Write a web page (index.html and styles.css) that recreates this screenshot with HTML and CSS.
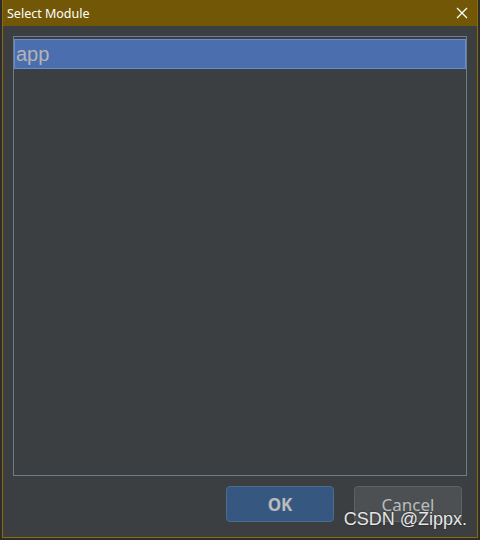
FILE: index.html
```html
<!DOCTYPE html>
<html>
  <head>
    <meta charset="utf-8" />
    <link rel="stylesheet" href="styles.css">
  </head>
  <body>
    <div class="screen">
      <div class="dialog">
        <div class="titlebar">
          <span class="title">Select Module</span>
          <svg class="close" width="12" height="12" viewBox="0 0 12 12">
            <path d="M1 1 L11 11 M11 1 L1 11" stroke="#ffffff" stroke-width="1.3" fill="none" />
          </svg>
        </div>

        <div class="content">
          <div class="module-list">
            <div class="module-item selected">app</div>
          </div>

          <div class="buttons">
            <button class="btn btn-ok">OK</button>
            <button class="btn btn-cancel">Cancel</button>
          </div>
        </div>
      </div>

      <div class="watermark">CSDN @Zippx.</div>
    </div>
  </body>
</html>
```

FILE: styles.css
```css
* {
  margin: 0;
  padding: 0;
  box-sizing: border-box;
}

body {
  background: #2b2b2b;
  font-family: "Open Sans", "Noto Sans", sans-serif;
}

.screen {
  position: relative;
  width: 480px;
  height: 540px;
  padding: 0 2px 2px 2px;
  background: #2e2c28;
}

.dialog {
  display: flex;
  flex-direction: column;
  height: 538px;
  border: 1px solid #8a6b10;
  border-top: none;
}

/* Title bar */
.titlebar {
  height: 26px;
  background: #725707;
  display: flex;
  align-items: center;
  justify-content: space-between;
  padding: 0 9px 0 4px;
}

.title {
  font-family: "Noto Sans", sans-serif;
  font-size: 12.5px;
  color: #ffffff;
}

.close {
  display: block;
}

/* Main area */
.content {
  flex: 1;
  background: #3c3f41;
  padding: 10px 10px 15px 10px;
  display: flex;
  flex-direction: column;
}

.module-list {
  height: 440px;
  border: 1px solid #6e7d8c;
  padding-top: 2px;
}

.module-item {
  height: 30px;
  padding-left: 1px;
  font-family: "Liberation Sans", Arial, sans-serif;
  font-size: 20px;
  line-height: 28px;
  color: #b4b4b4;
}

.module-item.selected {
  background: #4b6eaf;
  border: 1px solid #6a8cc8;
}

.buttons {
  display: flex;
  justify-content: flex-end;
  gap: 20px;
  margin-top: 10px;
  padding-right: 5px;
}

.btn {
  width: 108px;
  height: 36px;
  border-radius: 4px;
  font-family: "Noto Sans", sans-serif;
  font-size: 17px;
  color: #bbbbbb;
}

.btn-ok {
  background: #365880;
  border: 1px solid #4a6d8f;
  font-weight: bold;
}

.btn-cancel {
  background: #4c5052;
  border: 1px solid #5e6163;
}

.watermark {
  position: absolute;
  right: 13px;
  bottom: 10px;
  font-family: "Liberation Sans", Arial, sans-serif;
  font-size: 18px;
  color: #e6e6e6;
  text-shadow: 0 0 2px rgba(0, 0, 0, 0.6);
}
```
